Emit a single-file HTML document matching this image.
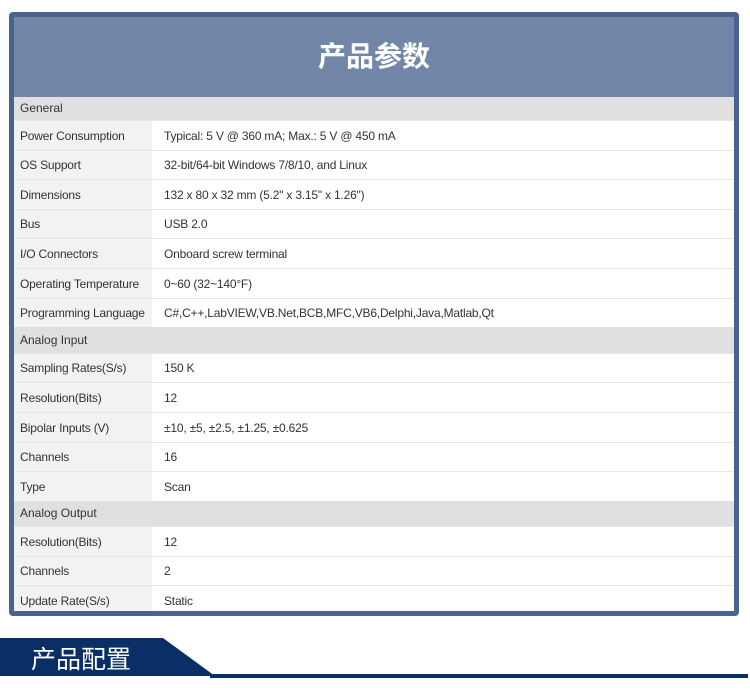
<!DOCTYPE html>
<html><head><meta charset="utf-8"><style>
body{margin:0;width:750px;height:697px;background:#fff;position:relative;overflow:hidden;font-family:"Liberation Sans","Noto Sans CJK SC",sans-serif;}
.frame{position:absolute;left:9px;top:12px;width:720px;height:594px;border:5px solid #48638f;border-radius:4px;background:#fff;}
.hd{height:80px;background:#7287a8;color:#fff;font-size:28px;font-weight:bold;text-align:center;line-height:76px;font-family:"Noto Sans CJK SC",sans-serif;}
.r{display:flex;font-size:12px;color:#333;border-top:1px solid #e6e6e6;box-sizing:border-box;}
.r .l{width:138px;box-sizing:border-box;background:#f2f2f2;padding-left:6px;white-space:nowrap;letter-spacing:-0.2px;}
.r .v{flex:1;padding-left:12px;white-space:nowrap;letter-spacing:-0.2px;}
.g{background:#e0e0e0;padding-left:6px;font-size:12px;color:#333;box-sizing:border-box;}
.bn{position:absolute;left:0;top:638px;width:215px;height:38px;background:#0a2f66;clip-path:polygon(0 0,163px 0,215px 38px,0 38px);}
.bn span{position:absolute;left:31px;top:2px;color:#fff;font-size:25px;font-family:"Noto Sans CJK SC",sans-serif;}
.ln{position:absolute;left:210px;top:674px;width:538px;height:4px;background:#0a2f66;}
</style></head><body>
<div class="frame">
<div class="hd">产品参数</div>
<div class="g" style="height:23px;line-height:23px">General</div>
<div class="r" style="height:30px;line-height:30px"><div class="l">Power Consumption</div><div class="v">Typical: 5 V @ 360 mA; Max.: 5 V @ 450 mA</div></div>
<div class="r" style="height:29px;line-height:29px"><div class="l">OS Support</div><div class="v">32-bit/64-bit Windows 7/8/10, and Linux</div></div>
<div class="r" style="height:30px;line-height:30px"><div class="l">Dimensions</div><div class="v">132 x 80 x 32 mm (5.2" x 3.15" x 1.26")</div></div>
<div class="r" style="height:29px;line-height:29px"><div class="l">Bus</div><div class="v">USB 2.0</div></div>
<div class="r" style="height:30px;line-height:30px"><div class="l">I/O Connectors</div><div class="v">Onboard screw terminal</div></div>
<div class="r" style="height:30px;line-height:30px"><div class="l">Operating Temperature</div><div class="v">0~60 (32~140°F)</div></div>
<div class="r" style="height:29px;line-height:29px"><div class="l">Programming Language</div><div class="v">C#,C++,LabVIEW,VB.Net,BCB,MFC,VB6,Delphi,Java,Matlab,Qt</div></div>
<div class="g" style="height:26px;line-height:26px">Analog Input</div>
<div class="r" style="height:29px;line-height:29px"><div class="l">Sampling Rates(S/s)</div><div class="v">150 K</div></div>
<div class="r" style="height:30px;line-height:30px"><div class="l">Resolution(Bits)</div><div class="v">12</div></div>
<div class="r" style="height:30px;line-height:30px"><div class="l">Bipolar Inputs (V)</div><div class="v">±10, ±5, ±2.5, ±1.25, ±0.625</div></div>
<div class="r" style="height:29px;line-height:29px"><div class="l">Channels</div><div class="v">16</div></div>
<div class="r" style="height:30px;line-height:30px"><div class="l">Type</div><div class="v">Scan</div></div>
<div class="g" style="height:25px;line-height:25px">Analog Output</div>
<div class="r" style="height:30px;line-height:30px"><div class="l">Resolution(Bits)</div><div class="v">12</div></div>
<div class="r" style="height:29px;line-height:29px"><div class="l">Channels</div><div class="v">2</div></div>
<div class="r" style="height:26px;line-height:30px"><div class="l">Update Rate(S/s)</div><div class="v">Static</div></div>
</div>
<div class="bn"><span>产品配置</span></div>
<div class="ln"></div>
</body></html>
